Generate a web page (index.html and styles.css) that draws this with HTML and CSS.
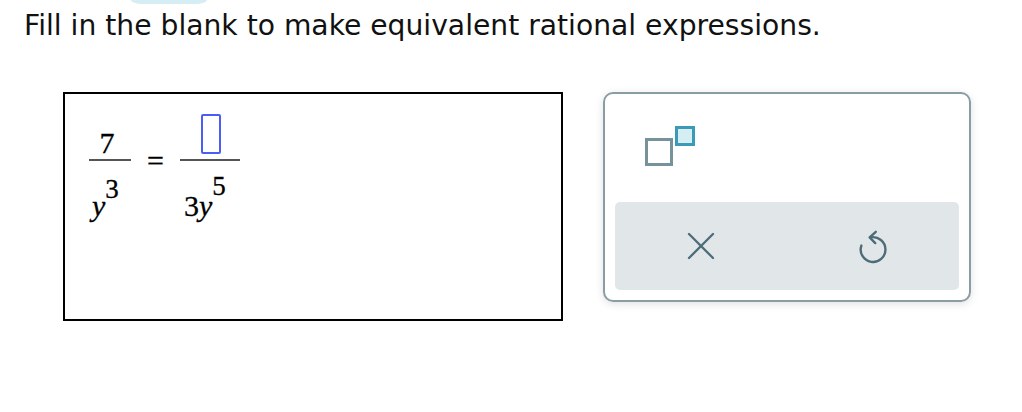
FILE: index.html
```html
<!DOCTYPE html>
<html>
<head>
<meta charset="utf-8">
<link rel="stylesheet" href="styles.css">
</head>
<body>
<div class="page">
  <div class="tab-pill"></div>
  <h1 class="prompt">Fill in the blank to make equivalent rational expressions.</h1>
  <div class="work-row">
    <div class="answer-box">
      <div class="math-row">
        <div class="frac frac-left">
          <div class="num num-left">7</div>
          <div class="bar"></div>
          <div class="den den-left">
            <span class="base"><i>y</i></span>
            <span class="exp exp-left">3</span>
          </div>
        </div>
        <div class="eq">=</div>
        <div class="frac frac-right">
          <div class="num num-right"><span class="blank"></span></div>
          <div class="bar"></div>
          <div class="den den-right">
            <span class="base">3<i>y</i></span>
            <span class="exp exp-right">5</span>
          </div>
        </div>
      </div>
    </div>
    <div class="tool-panel">
      <div class="tool-top">
        <button class="sup-btn" aria-label="Superscript">
          <span class="sq-base"></span>
          <span class="sq-sup"></span>
        </button>
      </div>
      <div class="tool-actions">
        <button class="act-btn" aria-label="Clear">
          <svg width="28" height="28" viewBox="0 0 28 28">
            <path d="M2 2 L26 26 M26 2 L2 26" fill="none" stroke="#4d6c78" stroke-width="2.3" stroke-linecap="round"/>
          </svg>
        </button>
        <button class="act-btn undo-btn" aria-label="Undo">
          <svg width="34" height="36" viewBox="0 0 30 32">
            <path d="M13 7.5 A11 11 0 1 1 4.66 14.74" fill="none" stroke="#4d6c78" stroke-width="2.1" stroke-linecap="round"/>
            <path d="M17.5 2.5 L12 7.5 L17 12.5" fill="none" stroke="#4d6c78" stroke-width="2.1" stroke-linecap="round" stroke-linejoin="round"/>
          </svg>
        </button>
      </div>
    </div>
  </div>
</div>
</body>
</html>
```

FILE: styles.css
```css
* { box-sizing: border-box; }
html, body { margin: 0; padding: 0; background: #fff; }
.page {
  width: 1022px;
  height: 412px;
  padding-left: 24px;
  font-family: "DejaVu Sans", Verdana, sans-serif;
  color: #111;
}
.tab-pill {
  width: 76px;
  height: 4px;
  margin-left: 107px;
  background: #d5edf3;
  border-bottom-left-radius: 12px 4px;
  border-bottom-right-radius: 12px 4px;
}
.prompt {
  margin: 7px 0 0 0;
  font-size: 28.2px;
  font-weight: normal;
  line-height: 30px;
}
.work-row {
  display: flex;
  align-items: flex-start;
  gap: 40px;
  margin-top: 51px;
  margin-left: 39px;
}
.answer-box {
  width: 500px;
  height: 229px;
  border: 2px solid #000;
  padding: 20px 0 0 24px;
}
.math-row {
  display: flex;
  align-items: flex-start;
  font-family: "Liberation Serif", "Times New Roman", serif;
  color: #000;
  -webkit-text-stroke: 0.3px #000;
}
.frac {
  display: flex;
  flex-direction: column;
}
.frac-left { width: 42px; margin-top: 14px; }
.frac-right { width: 60px; }
.num {
  font-size: 30px;
  line-height: 30px;
  text-align: center;
}
.num-left { padding-right: 6px; }
.num-right {
  display: flex;
  justify-content: center;
  padding-left: 2px;
}
.blank {
  display: block;
  width: 20px;
  height: 40px;
  border: 2px solid #4a5df5;
  border-radius: 2px;
}
.bar {
  height: 2px;
  background: #555;
  margin-top: 1px;
}
.num-right + .bar { margin-top: 5px; }
.den {
  display: flex;
  align-items: flex-start;
}
.den-left { padding-left: 3px; }
.den-right { padding-left: 4px; }
.base {
  font-size: 30px;
  line-height: 30px;
  margin-top: 30px;
  white-space: nowrap;
}
.exp {
  font-size: 27px;
  line-height: 27px;
}
.exp-left { margin-top: 15px; }
.exp-right { margin-top: 12px; }
.eq {
  font-size: 30px;
  line-height: 30px;
  margin: 32px 16px 0 16px;
}
.tool-panel {
  width: 368px;
  height: 210px;
  border: 2px solid #8a9da5;
  border-radius: 10px;
  box-shadow: 0 2px 8px rgba(0, 0, 0, 0.12);
  padding: 0 10px 10px 10px;
  display: flex;
  flex-direction: column;
}
.tool-top {
  height: 108px;
  padding: 32px 0 0 30px;
}
.sup-btn {
  display: flex;
  align-items: flex-start;
  border: 0;
  background: none;
  padding: 0;
  cursor: pointer;
}
.sq-base {
  display: block;
  width: 28px;
  height: 28px;
  margin-top: 12px;
  border: 3px solid #78929b;
  background: #fff;
}
.sq-sup {
  display: block;
  width: 20px;
  height: 20px;
  margin-left: 2px;
  border: 3px solid #3b9ab5;
  background: #d4eef4;
}
.tool-actions {
  flex: 1;
  display: flex;
  background: #e1e6e9;
  border-radius: 5px;
}
.act-btn {
  flex: 1;
  display: flex;
  align-items: center;
  justify-content: center;
  border: 0;
  background: none;
  padding: 0;
  cursor: pointer;
}
.undo-btn { padding-top: 1px; }
```
